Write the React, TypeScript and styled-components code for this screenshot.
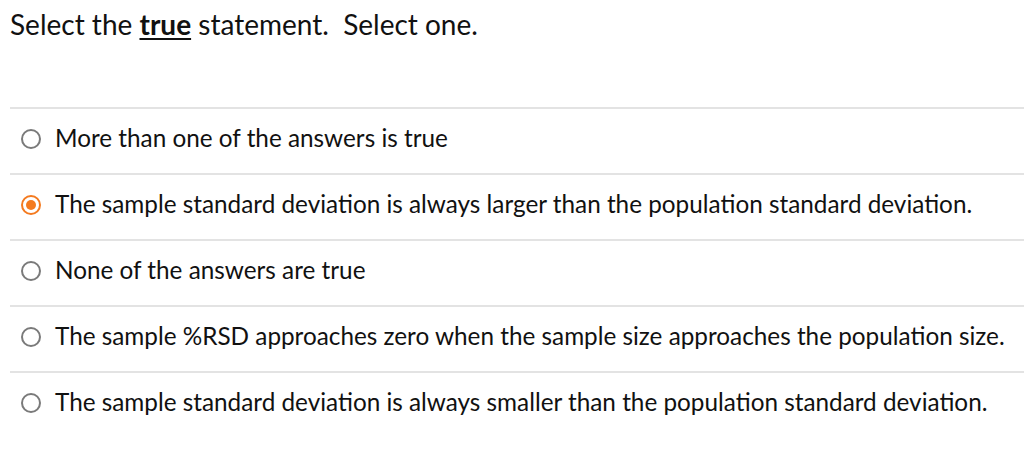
import React, { useState } from 'react';
import styled, { createGlobalStyle } from 'styled-components';

const GlobalStyle = createGlobalStyle`
  html, body {
    margin: 0;
    padding: 0;
    background: #ffffff;
  }
  body {
    font-family: Lato, "Open Sans", "Liberation Sans", sans-serif;
    color: #111111;
  }
`;

const Page = styled.div`
  width: 1024px;
  height: 449px;
  overflow: hidden;
  padding-left: 10px;
  box-sizing: border-box;
`;

const Prompt = styled.div`
  font-size: 28px;
  line-height: 32px;
  padding-top: 8px;
  margin-bottom: 67px;
  white-space: pre;
`;

const Strong = styled.strong`
  font-weight: 700;
  text-decoration: underline;
  text-underline-offset: 3px;
  text-decoration-thickness: 2px;
`;

const Choices = styled.div`
  display: flex;
  flex-direction: column;
`;

const Choice = styled.label`
  display: flex;
  align-items: center;
  gap: 14px;
  height: 58px;
  padding-bottom: 6px;
  box-sizing: content-box;
  border-top: 2px solid #e3e3e3;
  padding-left: 11px;
  font-size: 24.3px;
  line-height: 28px;
  cursor: pointer;
`;

const Radio = styled.span<{ $checked: boolean }>`
  flex: none;
  width: 20px;
  height: 20px;
  margin-top: 2px;
  border-radius: 50%;
  box-sizing: border-box;
  border: 2px solid ${(p) => (p.$checked ? '#f47a1f' : '#7a7a7a')};
  display: flex;
  align-items: center;
  justify-content: center;
  background: #fff;

  &::after {
    content: '';
    display: ${(p) => (p.$checked ? 'block' : 'none')};
    width: 10px;
    height: 10px;
    border-radius: 50%;
    background: #f47a1f;
  }
`;

const answers = [
  'More than one of the answers is true',
  'The sample standard deviation is always larger than the population standard deviation.',
  'None of the answers are true',
  'The sample %RSD approaches zero when the sample size approaches the population size.',
  'The sample standard deviation is always smaller than the population standard deviation.',
];

const App: React.FC = () => {
  const [selected, setSelected] = useState(1);

  return (
    <Page>
      <GlobalStyle />
      <Prompt>
        Select the <Strong>true</Strong> statement.  Select one.
      </Prompt>
      <Choices>
        {answers.map((text, i) => (
          <Choice key={i} onClick={() => setSelected(i)}>
            <Radio $checked={selected === i} />
            {text}
          </Choice>
        ))}
      </Choices>
    </Page>
  );
};

export default App;
